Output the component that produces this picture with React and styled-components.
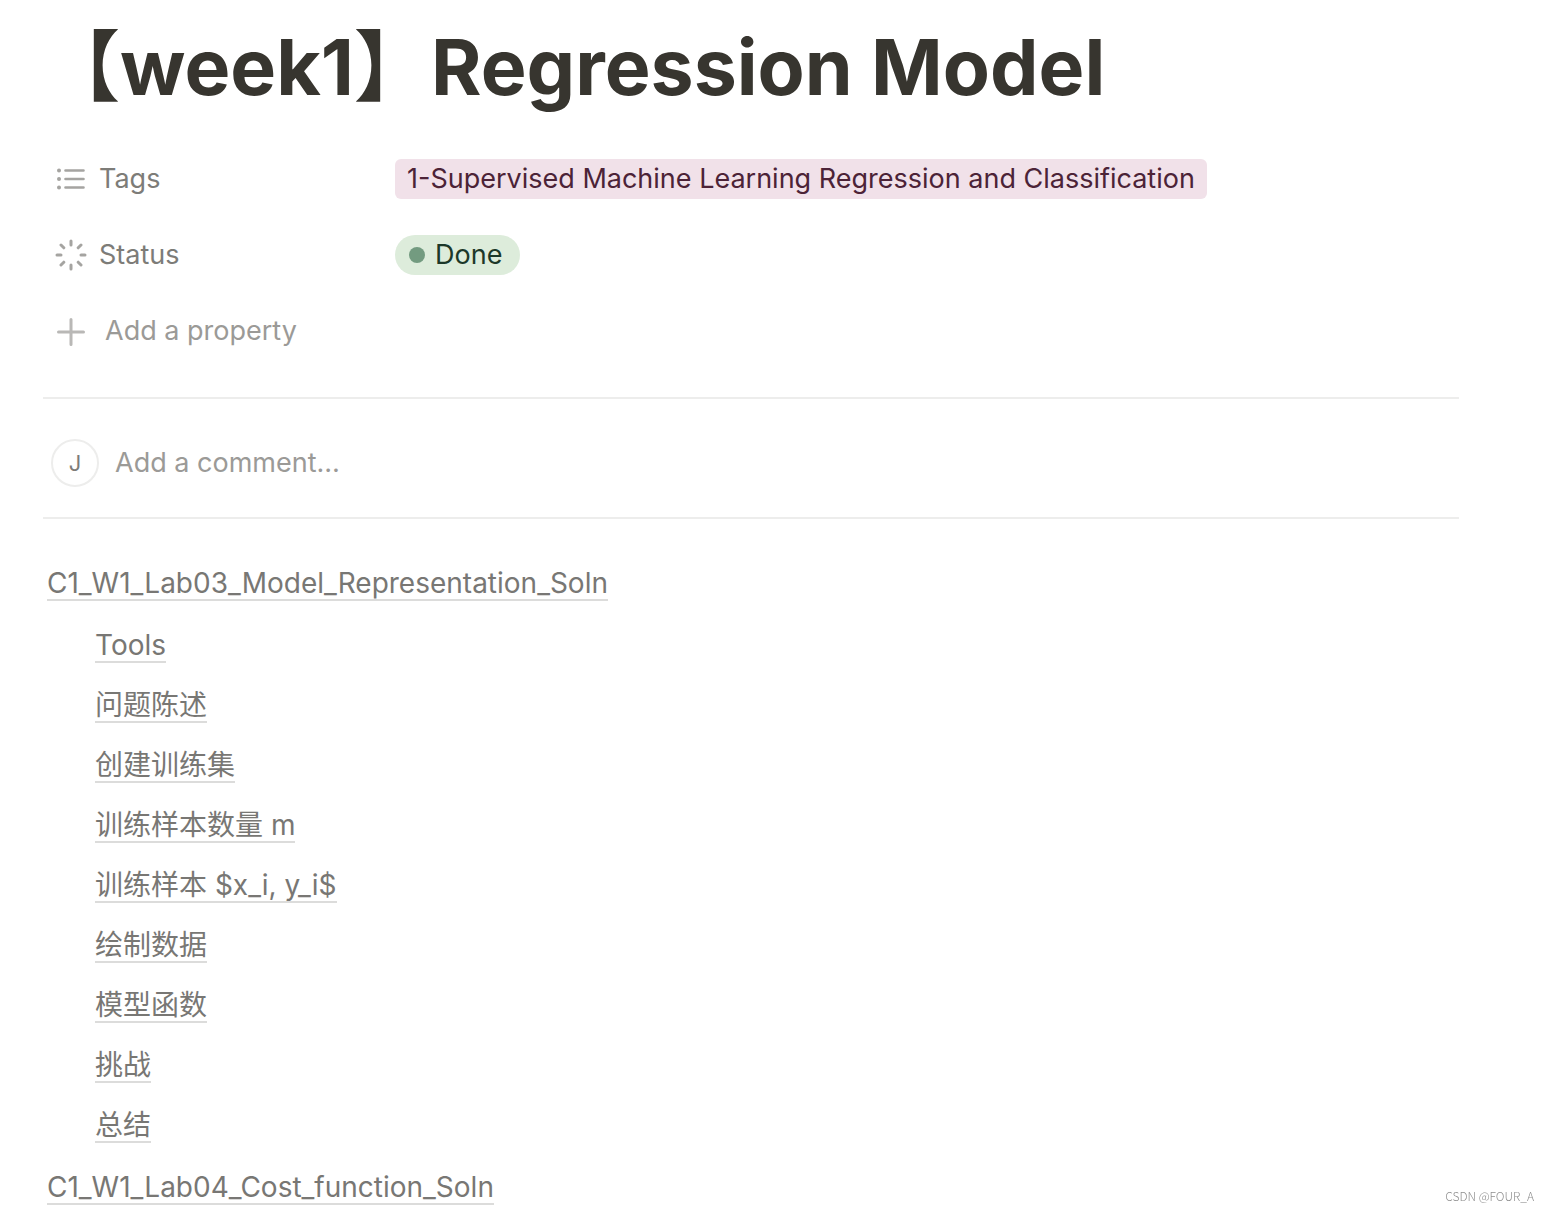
import React from 'react';
import styled, { createGlobalStyle } from 'styled-components';

const GlobalStyle = createGlobalStyle`
    * {
        box-sizing: border-box;
    }

    body {
        margin: 0;
        background: #fff;
        color: #37352f;
        font-family: Inter, "Noto Sans CJK SC", sans-serif;
        font-size: 27px;
        line-height: 40px;
    }
`;

const Page = styled.main`
    padding: 16px 90px 0 43px;
`;

const Title = styled.h1`
    margin: 0;
    font-size: 77px;
    font-weight: 700;
    line-height: 102px;
`;

const Properties = styled.dl`
    margin: 23px 0 0;
`;

const Property = styled.div`
    display: flex;
    align-items: center;
    height: 76px;
    padding-left: 12px;
`;

const PropertyName = styled.dt`
    display: flex;
    align-items: center;
    gap: 12px;
    width: 340px;
    color: #7d7c78;
`;

const PropertyValue = styled.dd`
    margin: 0;
`;

const Icon = styled.svg`
    width: 32px;
    height: 32px;
    flex: none;
    fill: none;
    stroke: ${props => props.$light ? '#b9b8b6' : '#a5a4a1'};
    stroke-width: 3;
    stroke-linecap: round;
`;

const Tag = styled.span`
    display: block;
    padding: 0 12px;
    border-radius: 6px;
    background: #f1e1e9;
    color: #4c2337;
`;

const Status = styled.span`
    display: flex;
    align-items: center;
    gap: 10px;
    padding: 0 18px 0 14px;
    border-radius: 20px;
    background: #ddecdb;
    color: #1c3829;
`;

const Dot = styled.span`
    width: 16px;
    height: 16px;
    border-radius: 50%;
    background: #739b80;
`;

const AddProperty = styled.button`
    display: flex;
    align-items: center;
    gap: 18px;
    height: 76px;
    padding: 0 12px;
    border: 0;
    background: none;
    color: #9b9a97;
    font: inherit;
    cursor: pointer;
`;

const Comment = styled.form`
    display: flex;
    align-items: center;
    gap: 16px;
    height: 122px;
    margin-top: 28px;
    padding: 10px 8px 0;
    border-top: 2px solid #ededec;
    border-bottom: 2px solid #ededec;
`;

const Avatar = styled.span`
    display: flex;
    align-items: center;
    justify-content: center;
    width: 48px;
    height: 48px;
    border: 2px solid #ededec;
    border-radius: 50%;
    color: #7d7c78;
    font-size: 22px;
`;

const CommentInput = styled.input`
    flex: 1;
    padding: 0;
    border: 0;
    outline: 0;
    color: inherit;
    font: inherit;

    &::placeholder {
        color: #9b9a97;
        opacity: 1;
    }
`;

const Outline = styled.ul`
    margin: ${props => props.$nested ? '2px 0' : '34px 0 0'};
    padding: 0 0 0 ${props => props.$nested ? '48px' : '4px'};
    font-size: 28px;
    list-style: none;
`;

const OutlineRow = styled.div`
    display: flex;
    align-items: center;
    height: 60px;
`;

const OutlineLink = styled.a`
    height: 36px;
    border-bottom: 2px solid #dcdcdb;
    color: #787774;
    line-height: 36px;
    text-decoration: none;
    white-space: nowrap;
`;

const Watermark = styled.footer`
    position: fixed;
    right: 15px;
    bottom: 7px;
    color: #8f8f8f;
    font-family: "Noto Sans CJK SC", sans-serif;
    font-size: 12px;
    font-weight: 300;
    line-height: 16px;
`;

const sections = [
    {
        title: 'C1_W1_Lab03_Model_Representation_Soln',
        children: [
            'Tools',
            '问题陈述',
            '创建训练集',
            '训练样本数量 m',
            '训练样本 $x_i, y_i$',
            '绘制数据',
            '模型函数',
            '挑战',
            '总结',
        ],
    },
    { title: 'C1_W1_Lab04_Cost_function_Soln', children: [] },
];

const ListIcon = () => (
    <Icon viewBox="0 0 32 32" aria-hidden="true">
        <path d="M10.5 7.5h18M10.5 16h18M10.5 24.5h18" strokeWidth="2.6" />
        <path d="M4 7.5h.01M4 16h.01M4 24.5h.01" strokeWidth="4" />
    </Icon>
);

const StatusIcon = () => (
    <Icon viewBox="0 0 32 32" aria-hidden="true">
        <path d="M16 2v4M16 26v4M2 16h4M26 16h4M6 6l2.8 2.8M23.2 23.2l2.8 2.8M6 26l2.8-2.8M23.2 8.8l2.8-2.8" />
    </Icon>
);

const PlusIcon = () => (
    <Icon viewBox="0 0 32 32" $light aria-hidden="true">
        <path d="M16 4.5v25M3.5 17h25" />
    </Icon>
);

export default function App() {
    return (
        <>
            <GlobalStyle />
            <Page>
                <Title>【week1】Regression Model</Title>
                <Properties>
                    <Property>
                        <PropertyName><ListIcon />Tags</PropertyName>
                        <PropertyValue>
                            <Tag>1-Supervised Machine Learning Regression and Classification</Tag>
                        </PropertyValue>
                    </Property>
                    <Property>
                        <PropertyName><StatusIcon />Status</PropertyName>
                        <PropertyValue>
                            <Status><Dot />Done</Status>
                        </PropertyValue>
                    </Property>
                </Properties>
                <AddProperty type="button"><PlusIcon />Add a property</AddProperty>
                <Comment>
                    <Avatar>J</Avatar>
                    <CommentInput type="text" placeholder="Add a comment…" aria-label="Add a comment" />
                </Comment>
                <Outline>
                    {sections.map(section => (
                        <li key={section.title}>
                            <OutlineRow>
                                <OutlineLink href="#">{section.title}</OutlineLink>
                            </OutlineRow>
                            {section.children.length > 0 && (
                                <Outline $nested>
                                    {section.children.map(child => (
                                        <li key={child}>
                                            <OutlineRow>
                                                <OutlineLink href="#">{child}</OutlineLink>
                                            </OutlineRow>
                                        </li>
                                    ))}
                                </Outline>
                            )}
                        </li>
                    ))}
                </Outline>
            </Page>
            <Watermark>CSDN @FOUR_A</Watermark>
        </>
    );
}
